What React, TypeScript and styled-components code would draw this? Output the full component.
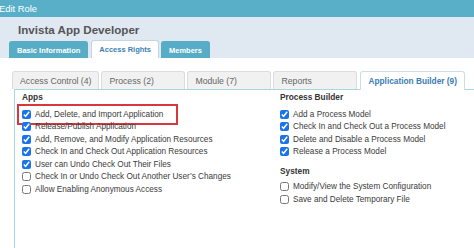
import React from "react";
import styled, { createGlobalStyle } from "styled-components";

const Global = createGlobalStyle`
  html, body { margin: 0; padding: 0; background: #fff; }
  body { font-family: "Liberation Sans", Arial, sans-serif; }
  #root { width: 474px; height: 248px; overflow: hidden; }
`;

const Page = styled.div`
  width: 474px;
  height: 248px;
  overflow: hidden;
  display: flex;
  flex-direction: column;
`;

const TitleBar = styled.div`
  height: 17px;
  flex: none;
  background: #59afc7;
  color: #fff;
  font-size: 9.4px;
  line-height: 17px;
  text-indent: -1px;
  white-space: nowrap;
`;

const Header = styled.div`
  height: 41px;
  flex: none;
  background: #e0e8f2;
  display: flex;
  flex-direction: column;
  justify-content: space-between;
  padding-top: 6.5px;
  box-sizing: border-box;
`;

const RoleName = styled.div`
  font-size: 11.6px;
  line-height: 11.6px;
  font-weight: bold;
  color: #555;
  padding-left: 18px;
  white-space: nowrap;
`;

const OuterTabs = styled.div`
  display: flex;
  align-items: flex-end;
  padding-left: 9px;
  gap: 3px;
`;

const OuterTab = styled.div<{ $active?: boolean }>`
  height: ${(p) => (p.$active ? 18 : 17)}px;
  box-sizing: border-box;
  padding: 0 7px;
  display: flex;
  align-items: center;
  font-size: 7.5px;
  font-weight: bold;
  white-space: nowrap;
  border-radius: 3px 3px 0 0;
  background: ${(p) => (p.$active ? "#fff" : "#57adc5")};
  color: ${(p) => (p.$active ? "#3a7fb2" : "#fff")};
  border: 1px solid ${(p) => (p.$active ? "#c4d6df" : "#57adc5")};
  border-bottom: none;
  margin-right: ${(p) => (p.$active ? -1 : 0)}px;
`;

const Body = styled.div`
  flex: 1;
  display: flex;
  flex-direction: column;
  padding: 13px 0 0 12px;
  background: #fff;
`;

const InnerTabs = styled.div`
  display: flex;
  align-items: flex-end;
  gap: 2px;
  height: 18px;
  flex: none;
`;

const InnerTab = styled.div<{ $active?: boolean }>`
  height: ${(p) => (p.$active ? 19 : 18)}px;
  min-width: 84px;
  box-sizing: border-box;
  padding: 0 7px;
  display: flex;
  align-items: center;
  white-space: nowrap;
  border-radius: 3px 3px 0 0;
  border: 1px solid ${(p) => (p.$active ? "#cfdde2" : "#dcdcdc")};
  border-bottom: none;
  background: ${(p) => (p.$active ? "#fff" : "#f1f1f1")};
  color: ${(p) => (p.$active ? "#3b7cb5" : "#666")};
  font-size: ${(p) => (p.$active ? 8.3 : 8.7)}px;
  font-weight: ${(p) => (p.$active ? "bold" : "normal")};
  margin-left: ${(p) => (p.$active ? 1 : 0)}px;
  position: relative;
  z-index: 1;
  margin-bottom: ${(p) => (p.$active ? -1 : 0)}px;
`;

const Panel = styled.div`
  flex: 1;
  margin-left: 2px;
  border-left: 1px solid #a7d7e1;
  border-top: 1px solid #a7d7e1;
  display: grid;
  grid-template-columns: 258px 1fr;
  padding: 1px 0 0 7px;
  align-items: start;
`;

const Column = styled.div`
  display: flex;
  flex-direction: column;
`;

const Heading = styled.div<{ $spaced?: boolean }>`
  font-size: 8.3px;
  font-weight: bold;
  color: #333;
  line-height: 12px;
  height: 12px;
  margin-top: ${(p) => (p.$spaced ? 7 : 0)}px;
  margin-bottom: ${(p) => (p.$spaced ? 3.5 : 5)}px;
  white-space: nowrap;
`;

const Row = styled.label`
  position: relative;
  display: flex;
  align-items: center;
  gap: 4px;
  height: 12.5px;
  font-size: 8.2px;
  color: #3a3a3a;
  white-space: nowrap;
`;

const Box = styled.input`
  width: 9px;
  height: 9px;
  margin: 0;
  flex: none;
  accent-color: #1a73e8;
`;

const Highlight = styled.div`
  position: absolute;
  left: -5px;
  top: -4px;
  width: 161px;
  height: 21px;
  box-sizing: border-box;
  border: 2px solid #d9363e;
  pointer-events: none;
`;

type Item = { label: string; checked: boolean; highlight?: boolean };

const apps: Item[] = [
  { label: "Add, Delete, and Import Application", checked: true, highlight: true },
  { label: "Release/Publish Application", checked: true },
  { label: "Add, Remove, and Modify Application Resources", checked: true },
  { label: "Check In and Check Out Application Resources", checked: true },
  { label: "User can Undo Check Out Their Files", checked: true },
  { label: "Check In or Undo Check Out Another User\u2019s Changes", checked: false },
  { label: "Allow Enabling Anonymous Access", checked: false },
];

const processBuilder: Item[] = [
  { label: "Add a Process Model", checked: true },
  { label: "Check In and Check Out a Process Model", checked: true },
  { label: "Delete and Disable a Process Model", checked: true },
  { label: "Release a Process Model", checked: true },
];

const system: Item[] = [
  { label: "Modify/View the System Configuration", checked: false },
  { label: "Save and Delete Temporary File", checked: false },
];

const List = ({ items }: { items: Item[] }) => (
  <>
    {items.map((it) => (
      <Row key={it.label}>
        <Box type="checkbox" defaultChecked={it.checked} />
        <span>{it.label}</span>
        {it.highlight && <Highlight />}
      </Row>
    ))}
  </>
);

export default function App() {
  return (
    <>
      <Global />
      <Page>
        <TitleBar>Edit Role</TitleBar>
        <Header>
          <RoleName>Invista App Developer</RoleName>
          <OuterTabs>
            <OuterTab>Basic Information</OuterTab>
            <OuterTab $active>Access Rights</OuterTab>
            <OuterTab>Members</OuterTab>
          </OuterTabs>
        </Header>
        <Body>
          <InnerTabs>
            <InnerTab>Access Control (4)</InnerTab>
            <InnerTab>Process (2)</InnerTab>
            <InnerTab>Module (7)</InnerTab>
            <InnerTab>Reports</InnerTab>
            <InnerTab $active>Application Builder (9)</InnerTab>
          </InnerTabs>
          <Panel>
            <Column>
              <Heading>Apps</Heading>
              <List items={apps} />
            </Column>
            <Column>
              <Heading>Process Builder</Heading>
              <List items={processBuilder} />
              <Heading $spaced>System</Heading>
              <List items={system} />
            </Column>
          </Panel>
        </Body>
      </Page>
    </>
  );
}
